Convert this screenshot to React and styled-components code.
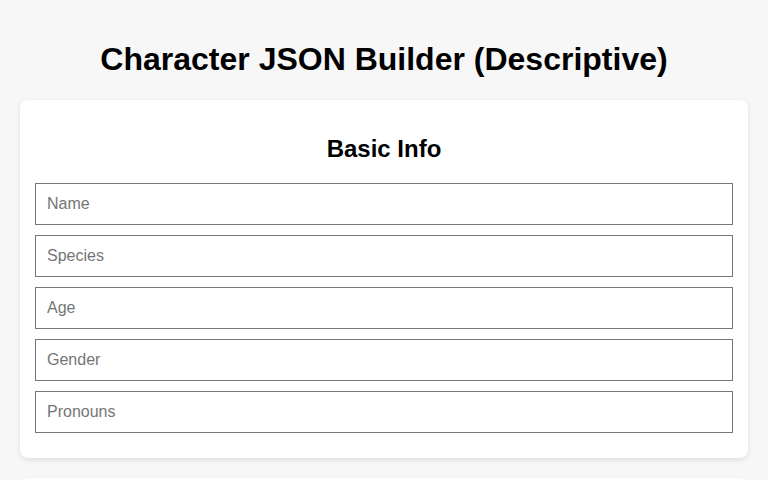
import React from "react";
import styled, { createGlobalStyle } from "styled-components";

const Global = createGlobalStyle`
  * { box-sizing: border-box; }
  body {
    margin: 0;
    padding: 20px;
    background: #f7f7f7;
    font-family: "Liberation Sans", Arial, sans-serif;
    color: #000;
  }
`;

const Title = styled.h1`
  text-align: center;
  font-size: 32px;
  font-weight: bold;
  margin: 21.44px 0;
`;

const Card = styled.section`
  background: #fff;
  border-radius: 8px;
  padding: 15px;
  margin-bottom: 20px;
  box-shadow: 0 2px 5px rgba(0, 0, 0, 0.1);
`;

const CardTitle = styled.h2`
  text-align: center;
  font-size: 24px;
  font-weight: bold;
  margin: 19.92px 0;
`;

const Field = styled.input`
  display: block;
  width: 100%;
  height: 42px;
  padding: 10px 11px;
  margin: 0 0 10px;
  border: 1px solid #767676;
  border-radius: 0;
  font-family: "Liberation Sans", Arial, sans-serif;
  font-size: 16px;
  color: #000;
  background: #fff;
  &::placeholder { color: #757575; }
`;

const fields = ["Name", "Species", "Age", "Gender", "Pronouns"];

export default function App() {
  return (
    <>
      <Global />
      <Title>Character JSON Builder (Descriptive)</Title>
      <Card>
        <CardTitle>Basic Info</CardTitle>
        {fields.map((f) => (
          <Field key={f} placeholder={f} />
        ))}
      </Card>
      <Card>
        <CardTitle>Appearance</CardTitle>
        <Field placeholder="Height" />
      </Card>
    </>
  );
}
